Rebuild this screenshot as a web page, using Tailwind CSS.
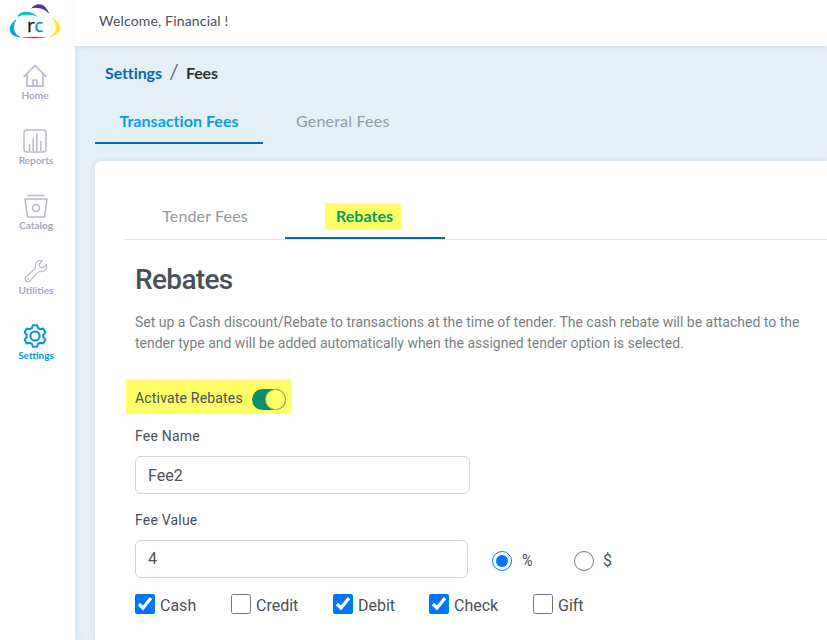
<!DOCTYPE html>
<html lang="en">
<head>
  <meta charset="UTF-8" />
  <meta name="viewport" content="width=device-width, initial-scale=1.0"/>
  <title>Settings - Fees</title>
  <script src="https://cdn.jsdelivr.net/npm/@tailwindcss/browser@4"></script>
</head>
<body class="flex h-screen overflow-hidden bg-[#e4eff6] font-['Roboto',sans-serif] text-[#495057]">

  <!-- Sidebar -->
  <aside class="w-[75px] shrink-0 bg-white font-['Lato',sans-serif]">
    <a href="#" class="block h-[46px]">
      <svg width="75" height="46" viewBox="0 0 75 46" fill="none">
        <path d="M31 8.500C36 2 45 2 49.500 14C44 8.500 38 6.500 31 8.500Z" fill="#5b2d90"/>
        <path d="M17 17C20 10.500 31 9.500 38 17C31 14 24 14 17 17Z" fill="#00c9b1"/>
        <path d="M16 20C8 25 7 36 20 37C13 34 12 26 16 20Z" fill="#0a9fe0" stroke="#0a9fe0" stroke-width=".7"/>
        <path d="M52 18C61 22 64 33 50 37C58 32 58 25 52 18Z" fill="#fdea1f" stroke="#fdea1f" stroke-width=".7"/>
        <path d="M23 37.500Q34 36.500 45 37.500Q34 38.600 23 37.500Z" fill="#ee1c68" stroke="#ee1c68" stroke-width=".4"/>
        <text x="27" y="32" font-size="19" font-family="Open Sans, sans-serif" fill="#111" stroke="#111" stroke-width=".3">r</text>
        <text x="34.500" y="32" font-size="19" textLength="8.500" lengthAdjust="spacingAndGlyphs" font-family="Open Sans, sans-serif" fill="#0a86cf" stroke="#0a86cf" stroke-width=".3">c</text>
      </svg>
    </a>
    <nav class="flex flex-col pt-[18px] text-[10px] leading-3 font-bold text-[#a6a7be]">
      <a href="#" class="flex h-[65px] flex-col items-center gap-px pr-[5px]">
        <svg width="24" height="24" viewBox="0 0 24 24" fill="none" stroke="#b9bacd" stroke-width="1.700" stroke-linejoin="round" stroke-linecap="round"><path d="M1 12.500L12 1.500L23 12.500M4 10V22.200H20V10M10 22V16H14V22"/></svg>
        <span>Home</span>
      </a>
      <a href="#" class="flex h-[65px] flex-col items-center gap-px pr-[4px]">
        <svg class="mr-px" width="24" height="24" viewBox="0 0 24 24" fill="none" stroke="#b9bacd" stroke-width="1.500"><rect x="1" y="1" width="22" height="22" rx="3"/><path d="M6.500 15V22M10.200 9V22M13.800 4V22M17.800 12V22"/></svg>
        <span class="-mr-px">Reports</span>
      </a>
      <a href="#" class="flex h-[65px] flex-col items-center gap-px pr-[4px]">
        <svg width="24" height="24" viewBox="0 0 24 24" fill="none" stroke="#b9bacd" stroke-width="1.500" stroke-linejoin="round" stroke-linecap="round"><path d="M4 1.500H20M1 5H23L20.500 23H3.500Z"/><circle cx="12" cy="14" r="3.500"/></svg>
        <span class="-mr-px">Catalog</span>
      </a>
      <a href="#" class="flex h-[65px] flex-col items-center gap-px pr-[4px]">
        <svg width="24" height="24" viewBox="0 0 24 24" fill="none" stroke="#b9bacd" stroke-width="1.200" stroke-linejoin="round"><path d="M18.500 1.700C14 .3 10.500 4 11.500 8.500C11.500 10.500 4 15.500 1.800 18.200C-.2 21 3 24.200 5.800 22.200C8.500 20 13.500 12.500 15.500 12.500C20 13.500 23.700 10 22.300 5.500L19 8.800L15.800 8.200L15.200 5Z"/><circle cx="4" cy="20" r=".4"/></svg>
        <span class="-mr-px">Utilities</span>
      </a>
      <a href="#" class="flex h-[65px] flex-col items-center gap-px pr-[4px] text-[#0598cf]">
        <svg class="mr-[2px]" width="24" height="24" viewBox="0 0 24 24" fill="none" stroke="#0598cf" stroke-width="2" stroke-linejoin="round"><path d="M9.800 1.200H14.200L15 4Q16.200 4.400 17.200 5.200L20.200 4.500L22.400 8.400L20.300 10.800V13.200L22.400 15.600L20.200 19.500L17.200 18.800Q16.200 19.600 15 20L14.200 22.800H9.800L9 20Q7.800 19.600 6.800 18.800L3.800 19.500L1.600 15.600L3.700 13.200V10.800L1.600 8.400L3.800 4.500L6.800 5.200Q7.800 4.400 9 4Z"/><circle cx="12" cy="12" r="4.600"/></svg>
        <span class="-mr-px">Settings</span>
      </a>
    </nav>
  </aside>

  <div class="flex min-w-0 flex-1 flex-col">
    <!-- Header -->
    <header class="h-[46px] shrink-0 bg-white pt-[11px] pl-6 font-['Lato',sans-serif] text-[14px] leading-5 tracking-[.17px] shadow-[0_1px_6px_rgba(80,110,130,.1)]">Welcome, Financial !</header>

    <main class="flex flex-1 flex-col pl-5 shadow-[inset_6px_0_8px_-6px_rgba(80,120,150,.12)]">
      <!-- Breadcrumb -->
      <div class="flex h-[54px] items-center pl-[10px] font-['Lato',sans-serif] text-[16px] font-bold">
        <a href="#" class="tracking-[-.1px] text-[#0569b4]">Settings</a>
        <svg class="mx-[7px] -mt-[3px]" width="10" height="18" viewBox="0 0 10 18" stroke="#6c757d" stroke-width="1.600"><path d="M1.500 17L8.500 1"/></svg>
        <span class="tracking-[-.1px] text-[#333]">Fees</span>
      </div>

      <!-- Page tabs -->
      <div class="flex h-[44px] shrink-0 font-['Lato',sans-serif] text-[16px] leading-[41px]">
        <a href="#" class="w-[168px] border-b-2 border-[#0569b4] text-center font-bold tracking-[.05px] text-[#0d9ce5]">Transaction Fees</a>
        <a href="#" class="pl-[33px] tracking-[.2px] text-[#929ca2]">General Fees</a>
      </div>

      <!-- Card -->
      <section class="mt-[17px] flex-1 rounded-tl-md bg-white pl-[30px] shadow-[0_0_5px_rgba(80,110,130,.15)]">
        <div class="flex h-[79px] items-end border-b border-[#e6e6e6] font-['Lato',sans-serif] text-[16px]">
          <a href="#" class="h-[46px] w-[160px] pt-[11px] text-center tracking-[.15px] text-[#92989d]">Tender Fees</a>
          <a href="#" class="flex h-[36px] w-[160px] items-start justify-center border-b-2 border-[#0569b4] font-bold">
            <span class="mr-[4px] h-[27px] w-[76px] bg-[#ffff66] pl-[3px] text-center leading-[25px] tracking-[.05px] text-[#069a63]">Rebates</span>
          </a>
        </div>

        <div class="pl-[10px]">
          <h2 class="pt-[22px] text-[28px] leading-9 font-medium tracking-[-.65px]">Rebates</h2>
          <p class="mt-[14px] w-[690px] text-[14px] leading-[21px] tracking-[-.005px] text-[#7a7f83]">Set up a Cash discount/Rebate to transactions at the time of tender. The cash rebate will be attached to the tender type and will be added automatically when the assigned tender option is selected.</p>

          <div class="mt-[25px] -ml-[9px] flex h-[35px] w-[165px] items-center bg-[#ffff66] pl-[9px] text-[14px]">
            <span class="mt-[3px] tracking-[.18px]">Activate Rebates</span>
            <span class="mt-[5px] ml-[9px] flex h-[21px] w-[34px] justify-end rounded-full bg-[#06916a]">
              <span class="size-[21px] rounded-full border border-[#a9b653] bg-[#ffff66]"></span>
            </span>
          </div>

          <form>
            <label for="fee-name" class="mt-3 block text-[14px] leading-5 tracking-[.2px]">Fee Name</label>
            <input id="fee-name" value="Fee2" class="mt-[10px] block h-[38px] w-[335px] rounded-md border border-[#ced4da] px-3 text-[16px]">
            <label for="fee-value" class="mt-4 block text-[14px] leading-5 tracking-[.2px]">Fee Value</label>
            <div class="mt-[10px] flex text-[16px]">
              <input id="fee-value" value="4" class="h-[38px] w-[333px] rounded-md border border-[#ced4da] px-3 pb-[2px]">
              <label class="ml-6 flex w-[82px] pt-[11px] leading-5"><input type="radio" name="unit" checked class="mr-[10px] size-5"><span class="origin-left scale-x-[.9]">%</span></label>
              <label class="flex pt-[11px] leading-5"><input type="radio" name="unit" class="mr-[9px] size-5"><span>$</span></label>
            </div>
            <div class="mt-4 flex text-[16px] leading-[23px]">
              <label class="flex w-[96px]"><input type="checkbox" checked class="mr-[5px] size-5">Cash</label>
              <label class="flex w-[102px]"><input type="checkbox" class="mr-[5px] size-5">Credit</label>
              <label class="flex w-[96px]"><input type="checkbox" checked class="mr-[5px] size-5">Debit</label>
              <label class="flex w-[104px]"><input type="checkbox" checked class="mr-[5px] size-5">Check</label>
              <label class="flex"><input type="checkbox" class="mr-[5px] size-5">Gift</label>
            </div>
          </form>
        </div>
      </section>
    </main>
  </div>

</body>
</html>
